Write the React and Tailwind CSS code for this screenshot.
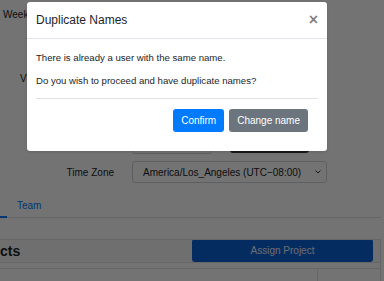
import React from 'react';

const font = { fontFamily: '"Liberation Sans", Arial, sans-serif' };

const DuplicateNamesModal = () => (
  <div className="absolute left-[27px] top-[2px] w-[300px] bg-white rounded-[3px] z-20 shadow-sm">
    <div className="h-[37px] px-[9px] flex items-center justify-between border-b border-[#e3e6ea]">
      <h5 className="text-[12px] text-[#212529]">Duplicate Names</h5>
      <button className="text-[16px] leading-none font-bold text-black/50">×</button>
    </div>
    <div className="px-[9px] pt-[11px] text-[9.6px] leading-[15px] text-[#212529]">
      <p className="mb-[8px]">There is already a user with the same name.</p>
      <p>Do you wish to proceed and have duplicate names?</p>
      <div className="mt-[10px] border-t border-[#dee2e6]" />
    </div>
    <div className="flex justify-end gap-[5px] pr-[19px] pt-[10px] pb-[19px]">
      <button className="h-[23px] px-[8px] rounded-[3px] bg-[#007bff] text-white text-[10px]">Confirm</button>
      <button className="h-[23px] px-[8px] rounded-[3px] bg-[#6c757d] text-white text-[10px]">Change name</button>
    </div>
  </div>
);

export default function App() {
  return (
    <div className="relative w-[384px] h-[281px] overflow-hidden bg-white text-[#212529]" style={font}>
      {/* profile form behind the dialog */}
      <div className="flex flex-col text-[10px]">
        <div className="h-[28px] flex items-center">
          <label className="w-[114px] pl-[3px] whitespace-nowrap">Weekly Committed Hours</label>
        </div>
        <div className="mt-[39px] h-[23px] flex items-center">
          <label className="w-[114px] pl-[20px] whitespace-nowrap">Video Call Preference</label>
        </div>
        <div className="mt-[41px] h-[23px] flex items-center gap-[18px] pl-[132px]">
          <input className="w-[80px] h-[23px] border border-[#ced4da] rounded-[3px]" readOnly />
          <button className="w-[79px] h-[22px] -mt-[1px] rounded-[3px] bg-[#343a40] text-white">Reset</button>
        </div>
        <div className="mt-[7px] h-[22px] flex items-center">
          <label className="w-[114px] text-right">Time Zone</label>
          <div className="ml-[18px] w-[195px] h-[22px] border border-[#ced4da] rounded-[3px] flex items-center justify-between pl-[10px] pr-[5px]">
            <span>America/Los_Angeles (UTC−08:00)</span>
            <svg width="6" height="4" viewBox="0 0 6 4" fill="none" stroke="#343a40" strokeWidth="1">
              <path d="M0.5 0.5 L3 3 L5.5 0.5" />
            </svg>
          </div>
        </div>

        {/* tabs */}
        <div className="mt-[12px] h-[23px] w-[381px] flex items-end border-b border-[#dee2e6]">
          <div className="w-[7px] h-[2px] bg-[#007bff] -mb-[1px]" />
          <div className="h-[23px] flex items-center pl-[10px] text-[#007bff]">Team</div>
        </div>

        {/* projects card */}
        <div className="mt-[21px] w-[381px] border-t border-r border-[#dee2e6]">
          <div className="h-[23px] flex items-center justify-between bg-[#f7f7f7] border-b border-[#dee2e6] overflow-hidden">
            <h4 className="-ml-[35px] text-[14px] font-bold">Projects</h4>
            <button className="w-[181px] h-[23px] mr-[7px] -mt-[1px] rounded-[3px] bg-[#0d62d8] text-[#e8eef8] text-[10px]">Assign Project</button>
          </div>
          <div className="mt-[5px] flex h-[20px] border-t border-[#dee2e6]">
            <div className="w-[318px] border-r border-[#dee2e6]" />
            <div className="flex-1" />
          </div>
        </div>
      </div>

      {/* backdrop */}
      <div className="absolute inset-0 bg-black/[0.55] z-10" />
      <DuplicateNamesModal />
    </div>
  );
}
